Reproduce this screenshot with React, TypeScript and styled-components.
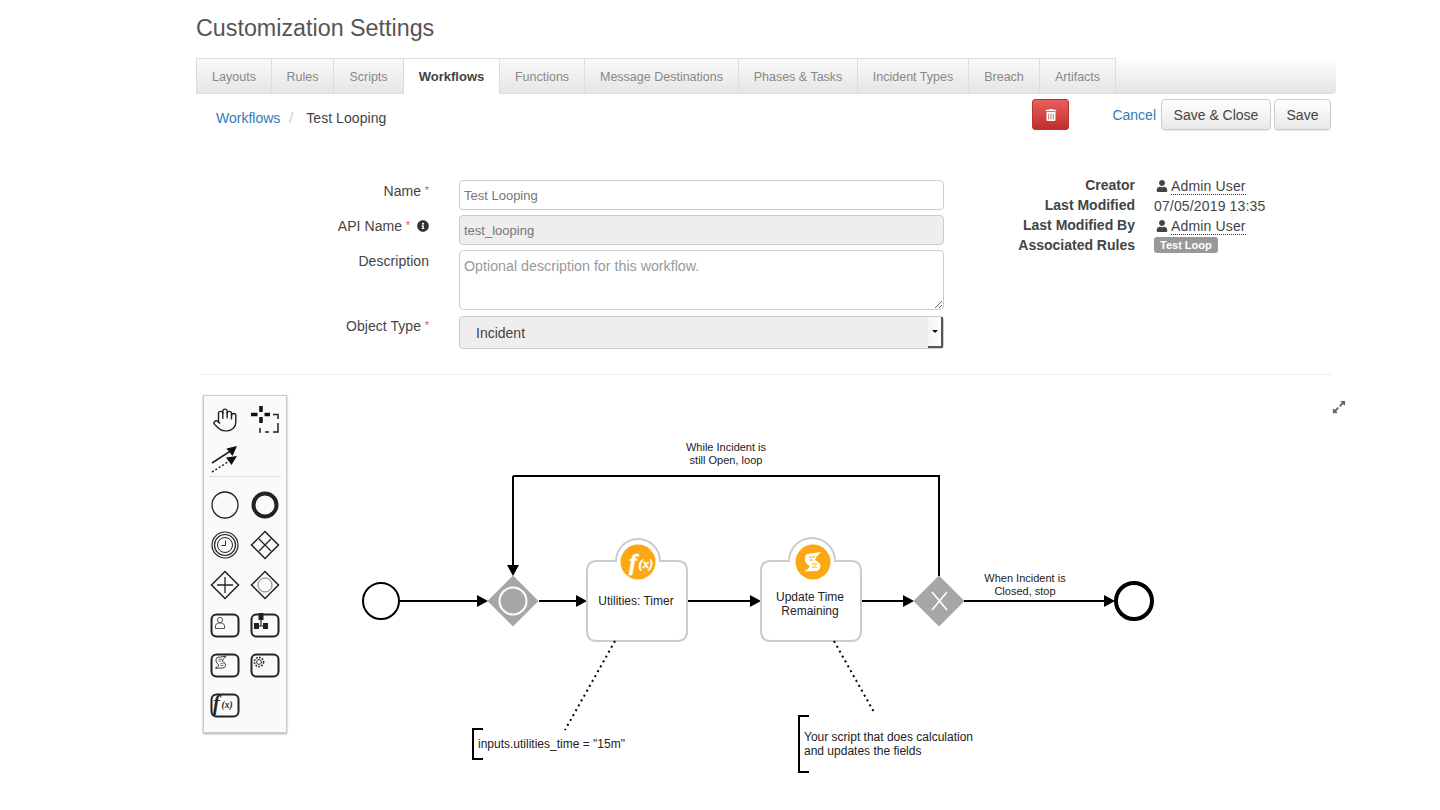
import React, { FC } from 'react';
import styled, { createGlobalStyle } from 'styled-components';
import { FaExpandAlt, FaInfoCircle, FaTrashAlt, FaUser } from 'react-icons/fa';
import { Hand } from 'lucide-react';

const GlobalStyle = createGlobalStyle`
  html, body {
    margin: 0;
    padding: 0;
    background: #fff;
    font-family: "Liberation Sans", Arial, sans-serif;
    color: #333;
    overflow: hidden;
  }
`;

const Page = styled.div`
  width: 1140px;
  height: 810px;
  margin-left: 196px;
`;
const Title = styled.h1`
  margin: 0;
  height: 58px;
  font-size: 23.3px;
  line-height: 56px;
  font-weight: 400;
  color: #555;
`;

const TabBar = styled.div`
  display: flex;
  height: 36px;
  box-sizing: border-box;
  background: linear-gradient(#fff, #e4e4e4);
  border-bottom: 1px solid #ddd;
  border-bottom-right-radius: 4px;
`;
const Tab = styled.div<{ $active?: boolean; $width: number }>`
  box-sizing: border-box;
  width: ${(p) => p.$width}px;
  height: ${(p) => (p.$active ? 36 : 35)}px;
  text-align: center;
  line-height: 36px;
  font-size: ${(p) => (p.$active ? 13 : 12.5)}px;
  font-weight: ${(p) => (p.$active ? 700 : 400)};
  color: ${(p) => (p.$active ? '#444' : '#888')};
  background: ${(p) => (p.$active ? '#fff' : 'linear-gradient(#f9f9f9, #e6e6e6)')};
  border-top: 1px solid #ddd;
  border-right: 1px solid #ddd;
  &:first-child {
    border-left: 1px solid #ddd;
  }
`;

const Toolbar = styled.div`
  display: flex;
  align-items: flex-start;
  height: 31px;
  margin-top: 5px;
  padding: 0 5px 0 20px;
`;
const Breadcrumb = styled.div`
  display: flex;
  gap: 9px;
  margin-top: 9px;
  font-size: 14px;
  line-height: 20px;
`;
const CrumbLink = styled.span`
  color: #337ab7;
`;
const CrumbDivider = styled.span`
  margin-right: 4px;
  color: #ccc;
`;
const CrumbCurrent = styled.span`
  color: #444;
  letter-spacing: 0.07px;
`;
const Actions = styled.div`
  display: flex;
  align-items: center;
  margin-left: auto;
`;
const DeleteButton = styled.div`
  display: flex;
  align-items: center;
  justify-content: center;
  box-sizing: border-box;
  width: 37px;
  height: 31px;
  margin-right: 43px;
  border-radius: 3px;
  border: 1px solid #b33;
  background: linear-gradient(#e8605c, #bf2f2c);
  color: #fff;
  font-size: 12px;
`;
const CancelLink = styled.span`
  margin-right: 2px;
  font-size: 14px;
  color: #337ab7;
`;
const Button = styled.div<{ $width: number }>`
  box-sizing: border-box;
  width: ${(p) => p.$width}px;
  height: 31px;
  margin-left: 3px;
  border: 1px solid #ccc;
  border-radius: 4px;
  background: linear-gradient(#fff, #e8e8e8);
  box-shadow: 0 1px 1px rgba(0, 0, 0, 0.1);
  text-align: center;
  line-height: 30px;
  font-size: 14px;
  color: #444;
`;

const FormSection = styled.div`
  display: flex;
  margin-top: 50px;
`;
const FormGrid = styled.div`
  display: grid;
  grid-template-columns: 233px 485px;
  column-gap: 30px;
  row-gap: 5px;
  align-items: start;
`;
const FieldLabel = styled.label`
  display: flex;
  justify-content: flex-end;
  align-items: center;
  gap: 4px;
  padding-top: 2px;
  font-size: 14px;
  line-height: 18px;
  letter-spacing: 0.05px;
  color: #444;
`;
const Required = styled.span`
  color: #c55;
  font-size: 10px;
`;
const InfoIcon = styled.span`
  display: inline-flex;
  margin-left: 3px;
  font-size: 12px;
  color: #333;
`;
const TextInput = styled.input<{ $disabled?: boolean }>`
  display: block;
  box-sizing: border-box;
  width: 485px;
  height: 30px;
  padding: 0 4px;
  border: 1px solid #ccc;
  border-radius: 4px;
  outline: none;
  font-family: "Liberation Sans", Arial, sans-serif;
  font-size: 13px;
  color: #777;
  background: ${(p) => (p.$disabled ? '#eee' : '#fff')};
`;
const TextArea = styled.textarea`
  display: block;
  box-sizing: border-box;
  width: 485px;
  height: 60px;
  padding: 7px 4px;
  border: 1px solid #ccc;
  border-radius: 4px;
  outline: none;
  resize: both;
  font-family: "Liberation Sans", Arial, sans-serif;
  font-size: 14.25px;
  &::placeholder {
    color: #999;
  }
`;
const SelectBox = styled.div`
  display: flex;
  justify-content: space-between;
  box-sizing: border-box;
  width: 485px;
  height: 33px;
  margin-top: 1px;
  padding-left: 16px;
  border: 1px solid #ccc;
  border-radius: 4px;
  background: #eee;
  font-size: 14px;
  line-height: 33px;
  color: #444;
`;
const SelectButton = styled.div`
  display: flex;
  align-items: center;
  justify-content: center;
  box-sizing: border-box;
  width: 15px;
  height: 31px;
  background: linear-gradient(90deg, #f4f4f4, #fff);
  border-right: 2px solid #555;
  border-bottom: 2px solid #555;
`;
const SelectCaret = styled.span`
  width: 0;
  height: 0;
  border-left: 3px solid transparent;
  border-right: 3px solid transparent;
  border-top: 3px solid #111;
`;

const MetaGrid = styled.div`
  display: grid;
  grid-template-columns: 191px auto;
  grid-auto-rows: 20px;
  column-gap: 19px;
  margin-top: -5px;
  font-size: 14px;
  line-height: 20px;
  align-self: flex-start;
`;
const MetaLabel = styled.div`
  font-weight: 700;
  text-align: right;
  color: #444;
`;
const MetaValue = styled.div`
  display: flex;
  align-items: center;
  gap: 3px;
  padding-top: 1px;
  color: #444;
  letter-spacing: 0.15px;
`;
const UserIcon = styled.span`
  display: inline-flex;
  margin-left: 2px;
  font-size: 12px;
  color: #444;
`;
const UserName = styled.span`
  margin-top: 2px;
  line-height: 15px;
  border-bottom: 1px dotted #333;
`;
const Badge = styled.span`
  height: 16px;
  margin-top: -1px;
  padding: 0 6px;
  border-radius: 3px;
  background: #999;
  color: #fff;
  font-size: 11px;
  font-weight: 700;
  line-height: 16px;
  letter-spacing: 0;
`;

const Divider = styled.hr`
  height: 1px;
  margin: 25px 4px 1px;
  border: 0;
  background: #eee;
`;

const DiagramArea = styled.div`
  position: relative;
  height: 434px;
`;
const Canvas = styled.svg`
  display: block;
  width: 1140px;
  height: 434px;
`;
const DiagramText = styled.text<{ $start?: boolean; $size?: number }>`
  font-family: "Liberation Sans", Arial, sans-serif;
  font-size: ${(p) => p.$size ?? 12}px;
  fill: #222;
  text-anchor: ${(p) => (p.$start ? 'start' : 'middle')};
`;
const ExpandButton = styled.div`
  position: absolute;
  top: 24px;
  right: -10px;
  display: flex;
  color: #666;
  font-size: 14px;
`;

const Palette = styled.div`
  position: absolute;
  top: 19px;
  left: 7px;
  box-sizing: border-box;
  width: 84px;
  padding: 8px 0 11px;
  background: #fafafa;
  border: 1px solid #ccc;
  box-shadow: 0 1px 2px rgba(0, 0, 0, 0.35);
`;
const PaletteGroup = styled.div<{ $separated?: boolean }>`
  display: grid;
  grid-template-columns: 40px 40px;
  grid-auto-rows: 32px;
  row-gap: 8px;
  justify-content: center;
  margin: ${(p) => (p.$separated ? '12px 0 0' : '0 5px')};
  ${(p) => !p.$separated && 'border-bottom: 1px solid #ddd;'}
`;
const Tool = styled.div`
  display: flex;
  align-items: center;
  justify-content: center;
  color: #222;
`;
const ToolSvg = styled.svg`
  width: 32px;
  height: 32px;
`;
const ToolText = styled.text<{ $size: number }>`
  font-family: "Liberation Serif", serif;
  font-style: italic;
  font-weight: 700;
  font-size: ${(p) => p.$size}px;
  fill: #222;
`;
const BadgeText = styled.text<{ $size: number }>`
  font-family: "Liberation Serif", serif;
  font-style: italic;
  font-weight: 700;
  font-size: ${(p) => p.$size}px;
  fill: #fff;
  stroke: #fff;
  stroke-width: 0.4;
`;

const tabs = [
  { label: 'Layouts', width: 76 },
  { label: 'Rules', width: 62 },
  { label: 'Scripts', width: 70 },
  { label: 'Workflows', width: 96, active: true },
  { label: 'Functions', width: 85 },
  { label: 'Message Destinations', width: 154 },
  { label: 'Phases & Tasks', width: 119 },
  { label: 'Incident Types', width: 111 },
  { label: 'Breach', width: 71 },
  { label: 'Artifacts', width: 76 },
];

const scrollBody =
  'M-7.5 -8 Q-5 -10 -2 -9.5 L8.5 -11 Q3 -7 2 -3 Q8 0 7.5 4 Q6 8 3 8 L-9 8.5 Q-3 5 -3.5 3 Q-8 0 -8 -3 Q-8 -6 -7.5 -8 Z';
const scrollLines = 'M-4 -6 H2 M-4 -3 H0 M-1 1 H4 M-1 4 H4';

const TaskFrame: FC<{ x: number; bump: number; r: number }> = ({ x, bump, r }) => (
  <path
    d={`M${x + 10} 561 L${bump - r} 561 A${r} ${r} 0 0 1 ${bump + r} 561 L${x + 90} 561 Q${x + 100} 561 ${x + 100} 571 L${x + 100} 631 Q${x + 100} 641 ${x + 90} 641 L${x + 10} 641 Q${x} 641 ${x} 631 L${x} 571 Q${x} 561 ${x + 10} 561 Z`}
    fill="#fff"
    stroke="#ccc"
    strokeWidth={2}
  />
);

const Flow: FC<{ x1: number; x2: number; y?: number }> = ({ x1, x2, y = 601 }) => (
  <>
    <line x1={x1} y1={y} x2={x2 - 8} y2={y} stroke="#000" strokeWidth={2} />
    <polygon points={`${x2 - 11},${y - 6} ${x2},${y} ${x2 - 11},${y + 6}`} fill="#000" />
  </>
);

const Diamond: FC<{ cx: number; half: number }> = ({ cx, half }) => (
  <polygon points={`${cx - half},601 ${cx},${601 - half} ${cx + half},601 ${cx},${601 + half}`} fill="#a6a6a6" />
);

const TaskOutline: FC = () => <rect x={2.5} y={5.5} width={27} height={22} rx={5} fill="none" stroke="#222" strokeWidth={2} />;

const diamondPoints = '16,2.5 29.5,16 16,29.5 2.5,16';

const ToolPalette: FC = () => (
  <Palette>
    <PaletteGroup>
      <Tool>
        <Hand size={26} strokeWidth={1.3} />
      </Tool>
      <Tool>
        <ToolSvg viewBox="0 0 32 32">
          <path d="M12 2 V8 M12 13 V19 M2 10.5 H8.5 M15.5 10.5 H21" stroke="#111" strokeWidth={3.5} fill="none" />
          <path d="M24 10.5 H29 V15 M29 19 V28 H24 M20 28 H16 M12 28 H11 V24" stroke="#222" strokeWidth={1.5} fill="none" />
        </ToolSvg>
      </Tool>
      <Tool>
        <ToolSvg viewBox="0 0 32 32">
          <line x1={3} y1={19} x2={23} y2={6} stroke="#222" strokeWidth={1.5} />
          <polygon points="28,2 23.5,12 17.5,4.5" fill="#111" />
          <line x1={3} y1={28} x2={22} y2={16} stroke="#222" strokeWidth={1.5} strokeDasharray="2 2" />
          <polygon points="28,12 22.5,21 17,13.5" fill="#111" />
        </ToolSvg>
      </Tool>
    </PaletteGroup>
    <PaletteGroup $separated>
      <Tool>
        <ToolSvg viewBox="0 0 32 32">
          <circle cx={16} cy={16} r={13} fill="none" stroke="#222" strokeWidth={1.3} />
        </ToolSvg>
      </Tool>
      <Tool>
        <ToolSvg viewBox="0 0 32 32">
          <circle cx={16} cy={16} r={11.5} fill="none" stroke="#222" strokeWidth={4} />
        </ToolSvg>
      </Tool>
      <Tool>
        <ToolSvg viewBox="0 0 32 32">
          <circle cx={16} cy={16} r={13} fill="none" stroke="#222" strokeWidth={1.2} />
          <circle cx={16} cy={16} r={10.5} fill="none" stroke="#222" strokeWidth={1.2} />
          <circle cx={16} cy={16} r={7.5} fill="none" stroke="#222" strokeWidth={1} />
          <path d="M16.5 11.5 V16.5 H12.5" fill="none" stroke="#222" strokeWidth={1} />
        </ToolSvg>
      </Tool>
      <Tool>
        <ToolSvg viewBox="0 0 32 32">
          <polygon points={diamondPoints} fill="none" stroke="#222" strokeWidth={1.5} />
          <path d="M10 10 L22 22 M22 10 L10 22" stroke="#222" strokeWidth={1.3} />
        </ToolSvg>
      </Tool>
      <Tool>
        <ToolSvg viewBox="0 0 32 32">
          <polygon points={diamondPoints} fill="none" stroke="#222" strokeWidth={1.5} />
          <path d="M16 8 V24 M8 16 H24" stroke="#222" strokeWidth={1.3} />
        </ToolSvg>
      </Tool>
      <Tool>
        <ToolSvg viewBox="0 0 32 32">
          <polygon points={diamondPoints} fill="none" stroke="#222" strokeWidth={1.5} />
          <circle cx={16} cy={16} r={7} fill="none" stroke="#777" strokeWidth={1} />
        </ToolSvg>
      </Tool>
      <Tool>
        <ToolSvg viewBox="0 0 32 32">
          <TaskOutline />
          <circle cx={11} cy={11} r={2.6} fill="none" stroke="#444" strokeWidth={0.9} />
          <path d="M6.5 19.5 V17 Q6.5 15 9 14 H13 Q15.5 15 15.5 17 V19.5 Z" fill="none" stroke="#444" strokeWidth={0.9} />
        </ToolSvg>
      </Tool>
      <Tool>
        <ToolSvg viewBox="0 0 32 32">
          <TaskOutline />
          <rect x={9.5} y={4} width={5} height={7} fill="#222" />
          <rect x={5} y={14} width={5} height={6} fill="#222" />
          <rect x={14} y={14} width={5} height={6} fill="#222" />
          <path d="M10 17 H14 M12 11 V17" stroke="#222" strokeWidth={1.2} />
        </ToolSvg>
      </Tool>
      <Tool>
        <ToolSvg viewBox="0 0 32 32">
          <TaskOutline />
          <g transform="translate(12 14) scale(0.62)">
            <path d={scrollBody} fill="none" stroke="#333" strokeWidth={1.5} />
            <path d={scrollLines} fill="none" stroke="#444" strokeWidth={1.2} />
          </g>
        </ToolSvg>
      </Tool>
      <Tool>
        <ToolSvg viewBox="0 0 32 32">
          <TaskOutline />
          <circle cx={10} cy={13} r={2.4} fill="none" stroke="#333" strokeWidth={1} />
          <circle cx={10} cy={13} r={4.6} fill="none" stroke="#333" strokeWidth={1.6} strokeDasharray="1.8 1.2" />
        </ToolSvg>
      </Tool>
      <Tool>
        <ToolSvg viewBox="0 0 32 32">
          <TaskOutline />
          <ToolText $size={20} x={4} y={21}>
            f
          </ToolText>
          <ToolText $size={9.5} x={12.5} y={19}>
            (x)
          </ToolText>
        </ToolSvg>
      </Tool>
    </PaletteGroup>
  </Palette>
);

const WorkflowDiagram: FC = () => (
  <Canvas viewBox="196 376 1140 434">
    <circle cx={381} cy={601} r={18} fill="#fff" stroke="#000" strokeWidth={2} />
    <Flow x1={399} x2={488} />
    <Diamond cx={513} half={25.5} />
    <circle cx={513} cy={601} r={13.5} fill="#a6a6a6" stroke="#fff" strokeWidth={2} />
    <line x1={513} y1={476} x2={513} y2={568} stroke="#000" strokeWidth={2} />
    <polygon points="507,565 513,576 519,565" fill="#000" />
    <path d="M513 476 H939 V576" fill="none" stroke="#000" strokeWidth={2} />
    <Flow x1={539} x2={587} />

    <TaskFrame x={587} bump={638} r={22} />
    <circle cx={638} cy={562} r={17.5} fill="#fca812" />
    <BadgeText $size={24} x={629} y={570}>
      f
    </BadgeText>
    <BadgeText $size={12.5} x={638.5} y={568}>
      (x)
    </BadgeText>
    <DiagramText x={636} y={605}>
      Utilities: Timer
    </DiagramText>

    <Flow x1={688} x2={761} />

    <TaskFrame x={761} bump={812} r={23} />
    <circle cx={813} cy={562} r={17.5} fill="#fca812" />
    <g transform="translate(813 563)">
      <path d={scrollBody} fill="#fff" />
      <path d={scrollLines} fill="none" stroke="#fca812" strokeWidth={1} />
    </g>
    <DiagramText x={810} y={601}>
      Update Time
    </DiagramText>
    <DiagramText x={810} y={615}>
      Remaining
    </DiagramText>

    <Flow x1={862} x2={914} />
    <Diamond cx={939} half={25.5} />
    <path d="M932 592 L947 610 M947 592 L932 610" stroke="#fff" strokeWidth={1.6} />
    <Flow x1={964} x2={1115} />
    <circle cx={1134} cy={601} r={18} fill="#fff" stroke="#000" strokeWidth={4} />

    <DiagramText $size={11} x={726} y={451}>
      While Incident is
    </DiagramText>
    <DiagramText $size={11} x={726} y={464}>
      still Open, loop
    </DiagramText>
    <DiagramText $size={11} x={1025} y={582}>
      When Incident is
    </DiagramText>
    <DiagramText $size={11} x={1025} y={595}>
      Closed, stop
    </DiagramText>

    <line x1={615} y1={641} x2={565} y2={730} stroke="#000" strokeWidth={2} strokeDasharray="2 3.6" />
    <line x1={834} y1={641} x2={875} y2={714} stroke="#000" strokeWidth={2} strokeDasharray="2 3.6" />

    <path d="M483 729 H473 V759 H483" fill="none" stroke="#000" strokeWidth={2} />
    <DiagramText $start x={478} y={748}>
      inputs.utilities_time = "15m"
    </DiagramText>
    <path d="M809 716 H799 V772 H809" fill="none" stroke="#000" strokeWidth={2} />
    <DiagramText $start x={804} y={741}>
      Your script that does calculation
    </DiagramText>
    <DiagramText $start x={804} y={755}>
      and updates the fields
    </DiagramText>
  </Canvas>
);

export default function App() {
  return (
    <Page>
      <GlobalStyle />
      <Title>Customization Settings</Title>
      <TabBar>
        {tabs.map((t) => (
          <Tab key={t.label} $active={t.active} $width={t.width}>
            {t.label}
          </Tab>
        ))}
      </TabBar>
      <Toolbar>
        <Breadcrumb>
          <CrumbLink>Workflows</CrumbLink>
          <CrumbDivider>/</CrumbDivider>
          <CrumbCurrent>Test Looping</CrumbCurrent>
        </Breadcrumb>
        <Actions>
          <DeleteButton>
            <FaTrashAlt />
          </DeleteButton>
          <CancelLink>Cancel</CancelLink>
          <Button $width={110}>Save &amp; Close</Button>
          <Button $width={57}>Save</Button>
        </Actions>
      </Toolbar>
      <FormSection>
        <FormGrid>
          <FieldLabel>
            Name <Required>*</Required>
          </FieldLabel>
          <TextInput readOnly value="Test Looping" />
          <FieldLabel>
            API Name <Required>*</Required>
            <InfoIcon>
              <FaInfoCircle />
            </InfoIcon>
          </FieldLabel>
          <TextInput readOnly $disabled value="test_looping" />
          <FieldLabel>Description</FieldLabel>
          <TextArea placeholder="Optional description for this workflow." />
          <FieldLabel>
            Object Type <Required>*</Required>
          </FieldLabel>
          <SelectBox>
            Incident
            <SelectButton>
              <SelectCaret />
            </SelectButton>
          </SelectBox>
        </FormGrid>
        <MetaGrid>
          <MetaLabel>Creator</MetaLabel>
          <MetaValue>
            <UserIcon>
              <FaUser />
            </UserIcon>
            <UserName>Admin User</UserName>
          </MetaValue>
          <MetaLabel>Last Modified</MetaLabel>
          <MetaValue>07/05/2019 13:35</MetaValue>
          <MetaLabel>Last Modified By</MetaLabel>
          <MetaValue>
            <UserIcon>
              <FaUser />
            </UserIcon>
            <UserName>Admin User</UserName>
          </MetaValue>
          <MetaLabel>Associated Rules</MetaLabel>
          <MetaValue>
            <Badge>Test Loop</Badge>
          </MetaValue>
        </MetaGrid>
      </FormSection>
      <Divider />
      <DiagramArea>
        <WorkflowDiagram />
        <ToolPalette />
        <ExpandButton>
          <FaExpandAlt />
        </ExpandButton>
      </DiagramArea>
    </Page>
  );
}
